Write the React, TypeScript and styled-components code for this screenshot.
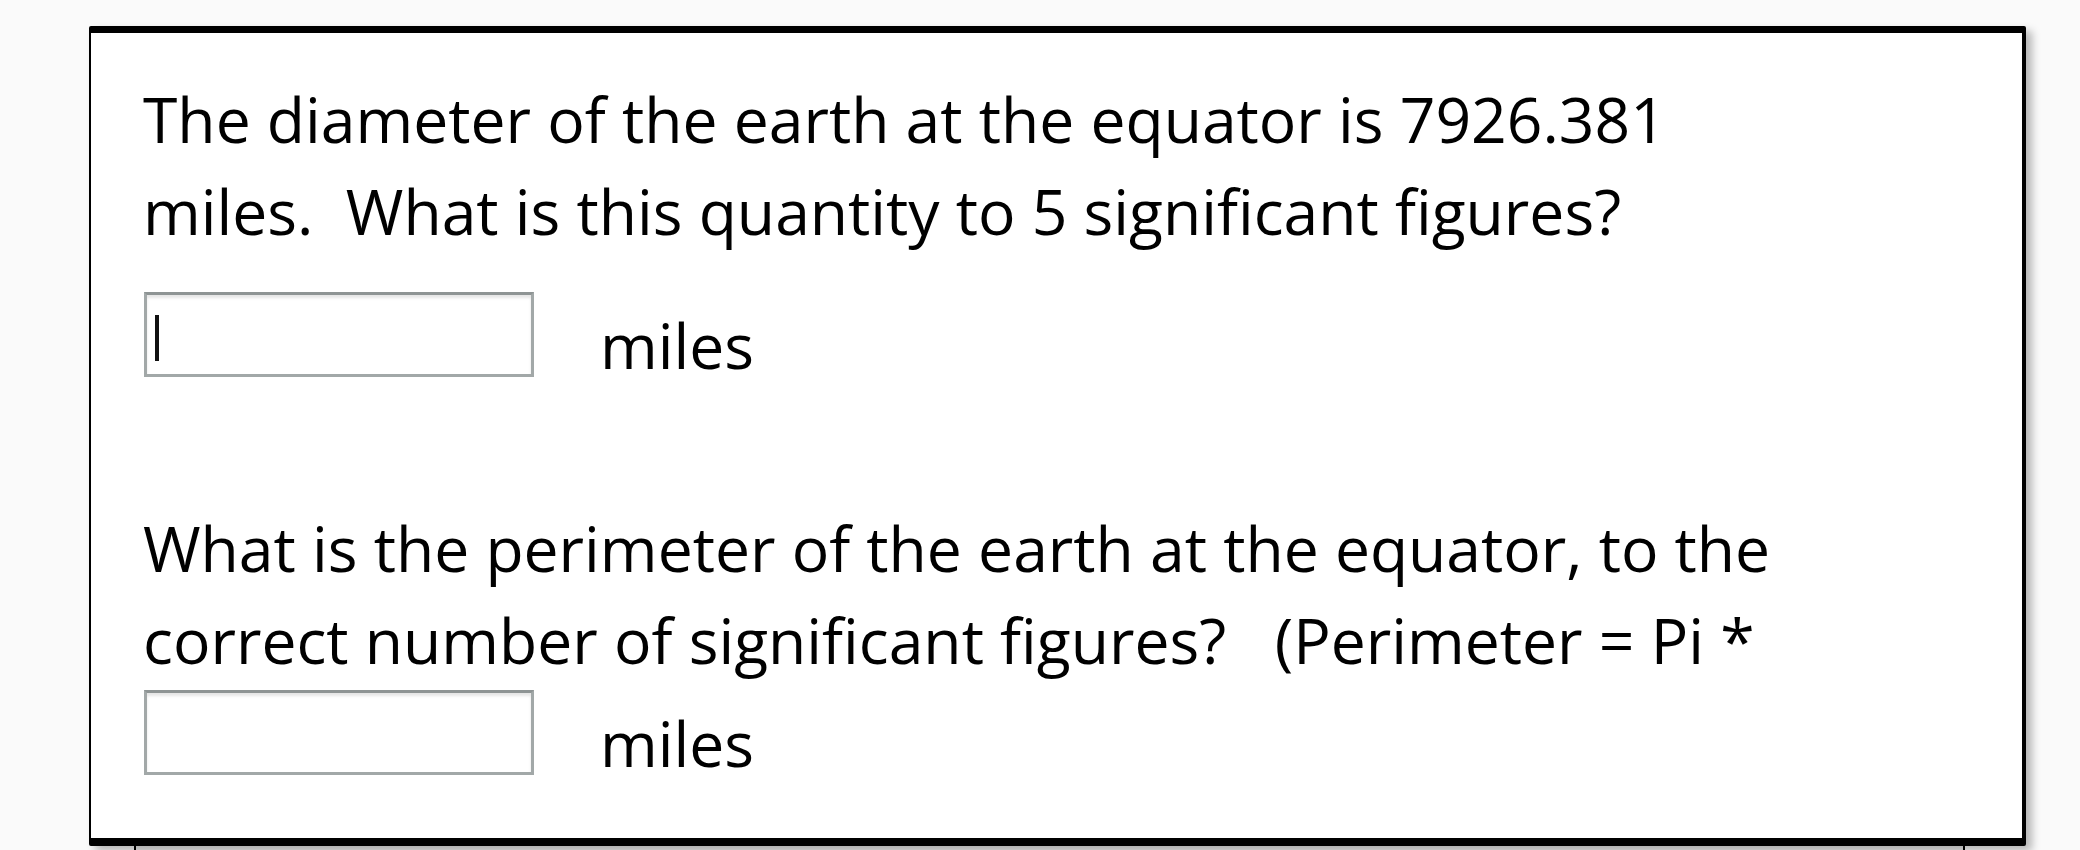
import React from "react";
import styled, { createGlobalStyle } from "styled-components";

const GlobalStyle = createGlobalStyle`
  html, body {
    margin: 0;
    padding: 0;
    background: #fafafa;
  }
  body {
    font-family: "Open Sans", "Noto Sans", sans-serif;
    color: #000;
  }
`;

const Page = styled.div`
  width: 2080px;
  height: 850px;
  overflow: hidden;
  padding: 26px 0 0 89px;
  box-sizing: border-box;
`;

const Card = styled.div`
  position: relative;
  z-index: 2;
  width: 1937px;
  box-sizing: border-box;
  background: #fff;
  border-style: solid;
  border-color: #000;
  border-width: 7px 4px 8px 2px;
  border-radius: 2px;
  box-shadow: 6px 5px 9px rgba(0, 0, 0, 0.28);
  padding: 40px 0 63px 52px;
`;

const NextCard = styled.div`
  width: 1831px;
  height: 60px;
  margin: -10px 0 0 45px;
  box-sizing: border-box;
  background: #ececec;
  border: 2px solid #000;
`;

const Question = styled.p<{ $gap?: number }>`
  margin: ${(p) => p.$gap ?? 0}px 0 0 0;
  width: 1680px;
  font-size: 62.4px;
  line-height: 92px;
`;

const AnswerRow = styled.div<{ $gap: number }>`
  display: flex;
  align-items: flex-end;
  margin-top: ${(p) => p.$gap}px;
  margin-left: 1px;
`;

const Field = styled.div`
  position: relative;
  width: 390px;
  height: 85px;
`;

const Input = styled.input`
  display: block;
  width: 100%;
  height: 100%;
  box-sizing: border-box;
  border: 3px solid #a2a8a8;
  border-top-color: #8e9494;
  box-shadow: inset 0 3px 3px rgba(0, 0, 0, 0.1);
  background: #fff;
  outline: none;
  padding: 0 9px;
  font-family: inherit;
  font-size: 60px;
`;

const Caret = styled.span`
  position: absolute;
  left: 11px;
  top: 23px;
  width: 4px;
  height: 46px;
  background: #111;
`;

const Unit = styled.span`
  margin-left: 66px;
  font-size: 62.4px;
  line-height: 60px;
  padding-bottom: 2px;
`;

export default function App() {
  return (
    <Page>
      <GlobalStyle />
      <Card>
        <Question>
          The diameter of the earth at the equator is 7926.381 miles.&nbsp; What
          is this quantity to 5 significant figures?
        </Question>
        <AnswerRow $gap={35}>
          <Field>
            <Input type="text" />
            <Caret />
          </Field>
          <Unit>miles</Unit>
        </AnswerRow>

        <Question $gap={125}>
          What is the perimeter of the earth at the equator, to the correct
          number of significant figures? &nbsp; (Perimeter = Pi *
        </Question>
        <AnswerRow $gap={4}>
          <Field>
            <Input type="text" />
          </Field>
          <Unit>miles</Unit>
        </AnswerRow>
      </Card>
      <NextCard />
    </Page>
  );
}
